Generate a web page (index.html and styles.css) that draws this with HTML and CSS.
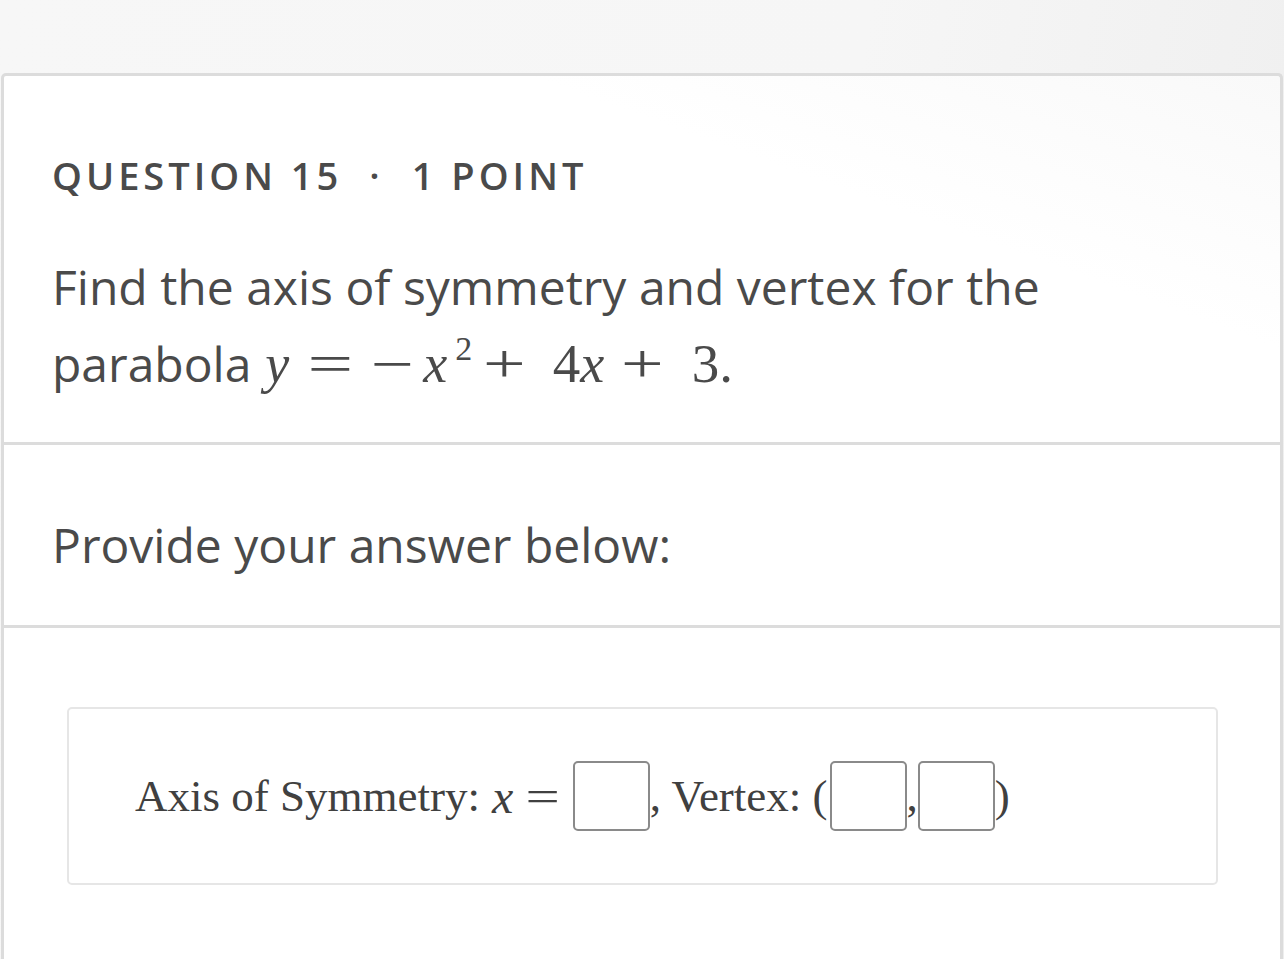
FILE: index.html
```html
<!DOCTYPE html>
<html>
<head>
<meta charset="utf-8">
<link rel="stylesheet" href="styles.css">
</head>
<body>
<div class="page">
  <div class="card">
    <section class="sec sec-q">
      <div class="label"><span>QUESTION 15</span><span class="dot">·</span><span>1 POINT</span></div>
      <div class="prompt">
        <div class="pline">Find the axis of symmetry and vertex for the</div>
        <div class="pline"><span class="word">parabola</span><span class="math"><i class="v-y">y</i><span class="op op-eq">=</span><span class="op op-minus">−</span><i class="v-x">x</i><sup>2</sup><span class="op op-plus1">+</span><span class="num">4</span><i class="v-x2">x</i><span class="op op-plus2">+</span><span class="num">3.</span></span></div>
      </div>
    </section>
    <section class="sec sec-p">
      <p class="provide">Provide your answer below:</p>
    </section>
    <section class="sec sec-a">
      <div class="answer">
        <span class="atext">Axis of Symmetry:</span><i class="ax">x</i><span class="eq">=</span><span class="box"></span><span class="atext vtx">, Vertex: (</span><span class="box"></span><span class="atext">,</span><span class="box"></span><span class="atext">)</span>
      </div>
    </section>
  </div>
</div>
</body>
</html>
```
FILE: styles.css
```css
html, body {
  margin: 0;
  padding: 0;
}
body {
  background: linear-gradient(100deg, #f7f7f7 0%, #f6f6f6 60%, #eeeeee 100%);
  height: 959px;
  overflow: hidden;
  font-family: "Open Sans", sans-serif;
  color: #4a4a4a;
}
.page {
  padding-top: 73px;
  padding-left: 1px;
  padding-right: 1px;
}
.card {
  background: linear-gradient(200deg, #f9f9f9 0%, #ffffff 20%, #ffffff 100%);
  border: 3px solid #dcdcdc;
  border-bottom: none;
  border-radius: 5px 5px 0 0;
  height: 900px;
}
.sec {
  border-bottom: 3px solid #dcdcdc;
  padding-left: 48px;
  padding-right: 50px;
}
.sec-q {
  height: 369px;
  box-sizing: border-box;
  padding-top: 75px;
}
.label {
  font-weight: 600;
  font-size: 38px;
  letter-spacing: 4px;
  line-height: 48px;
  white-space: pre;
}
.dot {
  margin: 0 28px 0 27px;
}
.prompt {
  margin: 49px 0 0 0;
  font-size: 48px;
  line-height: 77px;
}
.pline {
  white-space: nowrap;
}
.word {
  margin-right: 14px;
}
.math {
  font-family: "Liberation Serif", "DejaVu Serif", serif;
  font-size: 54px;
}
.math i { font-style: italic; }
.math sup {
  font-size: 34px;
  line-height: 0;
  vertical-align: 22px;
  margin-left: 8px;
}
.op {
  display: inline-block;
  transform: scaleX(1.35);
}
.op-eq {
  transform: scaleX(1.5);
  margin: 0 16px 0 26px;
}
.op-minus { margin: 0 16px 0 15px; transform: scaleX(1.42); }
.op-plus1 { margin: 0 33px 0 17px; transform: scaleX(1.4); }
.op-plus2 { margin: 0 34px 0 23px; transform: scaleX(1.4); }
.num { font-size: 55px; }
.sec-p {
  height: 183px;
  box-sizing: border-box;
  display: flex;
  align-items: center;
  padding-top: 18px;
}
.provide {
  margin: 0;
  font-size: 48px;
}
.sec-a {
  border-bottom: none;
  padding: 79px 62px 0 63px;
}
.answer {
  border: 2px solid #e6e6e6;
  border-radius: 5px;
  height: 174px;
  display: flex;
  align-items: center;
  padding-left: 66px;
  font-family: "Liberation Serif", "Times New Roman", serif;
  font-size: 45px;
  color: #404040;
}
.atext { white-space: pre; }
.ax {
  font-size: 48px;
  margin-left: 12px;
}
.eq {
  display: inline-block;
  transform: scaleX(1.35);
  margin: 0 17px 0 17px;
}
.vtx { margin-right: 2px; }
.box {
  display: inline-block;
  width: 73px;
  height: 66px;
  border: 2px solid #8a8a8a;
  border-radius: 5px;
}
```
